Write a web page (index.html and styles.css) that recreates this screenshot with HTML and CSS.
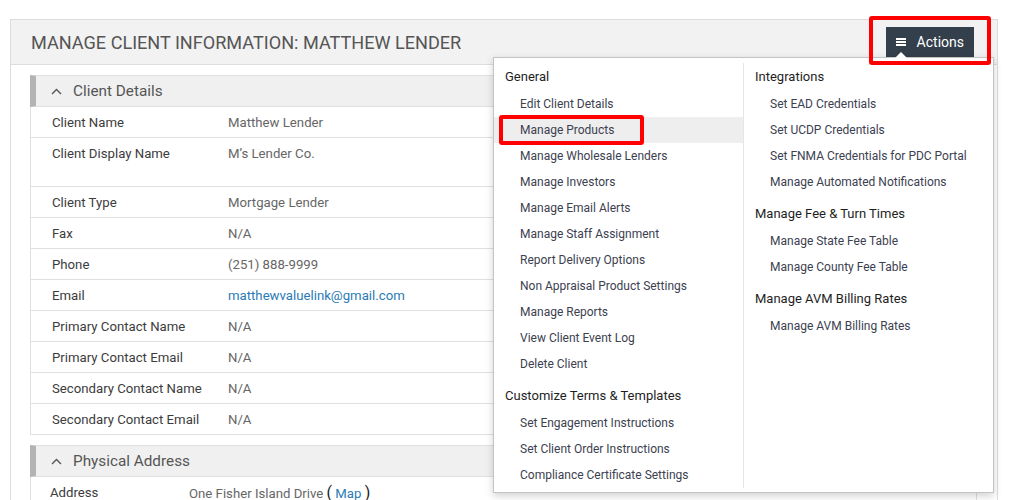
FILE: index.html
```html
<!DOCTYPE html>
<html>
	<head>
		<meta charset="UTF-8">
		<title>Manage Client Information</title>
		<link rel="stylesheet" href="styles.css">
	</head>

	<body>
		<div class="panel">
			<div class="panel-head">
				<h1 class="panel-title">Manage Client Information: Matthew Lender</h1>
				<div class="actions">
					<button class="actions-btn">
						<svg width="10" height="8" viewBox="0 0 10 8"><rect y="0" width="10" height="2" fill="#fff"/><rect y="3" width="10" height="2" fill="#fff"/><rect y="6" width="10" height="2" fill="#fff"/></svg>
						Actions
					</button>
					<span class="mark mark-actions"></span>
					<!-- menu opened from the Actions button -->
					<div class="menu">
						<span class="menu-caret"></span>
						<div class="menu-col">
							<div class="menu-head">General</div>
							<a class="menu-item" href="#">Edit Client Details</a>
							<a class="menu-item is-hover" href="#">Manage Products<span class="mark mark-item"></span></a>
							<a class="menu-item" href="#">Manage Wholesale Lenders</a>
							<a class="menu-item" href="#">Manage Investors</a>
							<a class="menu-item" href="#">Manage Email Alerts</a>
							<a class="menu-item" href="#">Manage Staff Assignment</a>
							<a class="menu-item" href="#">Report Delivery Options</a>
							<a class="menu-item" href="#">Non Appraisal Product Settings</a>
							<a class="menu-item" href="#">Manage Reports</a>
							<a class="menu-item" href="#">View Client Event Log</a>
							<a class="menu-item" href="#">Delete Client</a>
							<div class="menu-head">Customize Terms &amp; Templates</div>
							<a class="menu-item" href="#">Set Engagement Instructions</a>
							<a class="menu-item" href="#">Set Client Order Instructions</a>
							<a class="menu-item" href="#">Compliance Certificate Settings</a>
						</div>
						<div class="menu-col">
							<div class="menu-head">Integrations</div>
							<a class="menu-item" href="#">Set EAD Credentials</a>
							<a class="menu-item" href="#">Set UCDP Credentials</a>
							<a class="menu-item" href="#">Set FNMA Credentials for PDC Portal</a>
							<a class="menu-item" href="#">Manage Automated Notifications</a>
							<div class="menu-head">Manage Fee &amp; Turn Times</div>
							<a class="menu-item" href="#">Manage State Fee Table</a>
							<a class="menu-item" href="#">Manage County Fee Table</a>
							<div class="menu-head">Manage AVM Billing Rates</div>
							<a class="menu-item" href="#">Manage AVM Billing Rates</a>
						</div>
					</div>
				</div>
			</div>

			<div class="panel-body">
				<section class="sec">
					<div class="sec-head">
						<svg width="11" height="7" viewBox="0 0 11 7"><polyline points="1,6 5.5,1.5 10,6" fill="none" stroke="#555" stroke-width="1.4"/></svg>
						Client Details
					</div>
					<div class="sec-body">
						<div class="row"><span class="label">Client Name</span><span class="value">Matthew Lender</span></div>
						<div class="row row-tall"><span class="label">Client Display Name</span><span class="value">M’s Lender Co.</span></div>
						<div class="row"><span class="label">Client Type</span><span class="value">Mortgage Lender</span></div>
						<div class="row"><span class="label">Fax</span><span class="value">N/A</span></div>
						<div class="row"><span class="label">Phone</span><span class="value">(251) 888-9999</span></div>
						<div class="row"><span class="label">Email</span><a class="value link" href="#">matthewvaluelink@gmail.com</a></div>
						<div class="row"><span class="label">Primary Contact Name</span><span class="value">N/A</span></div>
						<div class="row"><span class="label">Primary Contact Email</span><span class="value">N/A</span></div>
						<div class="row"><span class="label">Secondary Contact Name</span><span class="value">N/A</span></div>
						<div class="row"><span class="label">Secondary Contact Email</span><span class="value">N/A</span></div>
					</div>
				</section>

				<section class="sec">
					<div class="sec-head">
						<svg width="11" height="7" viewBox="0 0 11 7"><polyline points="1,6 5.5,1.5 10,6" fill="none" stroke="#555" stroke-width="1.4"/></svg>
						Physical Address
					</div>
					<div class="sec-body">
						<div class="row row-addr"><span class="label">Address</span><span class="value">One Fisher Island Drive <span class="paren">(</span> <a class="link" href="#">Map</a> <span class="paren">)</span></span></div>
					</div>
				</section>
			</div>
		</div>
	</body>

</html>
```

FILE: styles.css
```css
/* panel + two collapsible sections, the Actions menu hangs over them */
body {
	margin: 0;
	padding: 19px 25px 0 10px;
	background-color: #fff;
	font-family: Roboto, "Liberation Sans", sans-serif;
	overflow: hidden;
}

.panel {
	border: 1px solid #ddd;
	border-bottom: none;
}

.panel-head {
	display: flex;
	align-items: center;
	justify-content: space-between;
	height: 44px;
	padding: 0 23px 0 20px;
	background-color: #f2f2f2;
	border-bottom: 1px solid #ddd;
}

.panel-title {
	margin: 0;
	font-size: 18.1px;
	font-weight: 400;
	color: #555;
	text-transform: uppercase;
}

/* ---- actions button & menu ---- */
.actions {
	position: relative;
}

.actions-btn {
	display: flex;
	align-items: center;
	gap: 11px;
	height: 30px;
	padding: 0 10px;
	border: none;
	background-color: #333f4b;
	color: #fff;
	font-family: Roboto, "Liberation Sans", sans-serif;
	font-size: 14px;
}

.mark {
	position: absolute;
	box-sizing: border-box;
	border: 4px solid #f00;
	border-radius: 3px;
	z-index: 5;
	pointer-events: none;
}

.mark-actions {
	left: -17px;
	top: -11px;
	width: 122px;
	height: 49px;
}

.mark-item {
	left: 5px;
	top: -2px;
	width: 145px;
	height: 30px;
}

.menu {
	position: absolute;
	top: 100%;
	right: -20px;
	width: 501px;
	box-sizing: border-box;
	display: grid;
	grid-template-columns: 249px 1fr;
	padding: 5px 0 4px;
	background-color: #fff;
	border: 1px solid #c4c4c4;
	box-shadow: 0 3px 8px rgba(0, 0, 0, 0.18);
	z-index: 4;
}

.menu-caret {
	position: absolute;
	top: -6px;
	left: 401px;
	border-left: 6px solid transparent;
	border-right: 6px solid transparent;
	border-bottom: 6px solid #fff;
}

.menu-col + .menu-col {
	border-left: 1px solid #e6e6e6;
}

.menu-head {
	padding: 0 0 1px 11px;
	line-height: 27px;
	font-size: 13px;
	color: #1e1e1e;
}

.menu-item + .menu-head {
	margin-top: 5px;
}

.menu-item {
	display: block;
	position: relative;
	padding-left: 26px;
	line-height: 26px;
	font-size: 12px;
	color: #3c4150;
	text-decoration: none;
}

.menu-item.is-hover {
	background-color: #eee;
}

/* ---- sections ---- */
.panel-body {
	padding: 10px 20px 0 19px;
}

.sec + .sec {
	margin-top: 10px;
}

.sec-head {
	display: flex;
	align-items: center;
	gap: 11px;
	height: 30px;
	padding-left: 15px;
	background-color: #f0f0f0;
	border: 1px solid #dde1e1;
	border-left: 6px solid #b3b3b3;
	font-size: 15.3px;
	color: #555;
}

.sec-body {
	border-left: 1px solid #dde1e1;
	border-right: 1px solid #dde1e1;
}

.row {
	display: grid;
	grid-template-columns: 176px 1fr;
	padding: 8px 21px 6px;
	line-height: 16px;
	font-size: 13.2px;
	border-bottom: 1px solid #dde1e1;
}

.row-tall {
	padding-bottom: 24px;
}

.row-addr {
	grid-template-columns: 139px 1fr;
	padding-left: 19px;
}

.label {
	color: #3c3c3c;
}

.value {
	color: #666;
}

.link {
	color: #2a7bb5;
	text-decoration: none;
}

.paren {
	color: #222;
	font-size: 16px;
}
```
